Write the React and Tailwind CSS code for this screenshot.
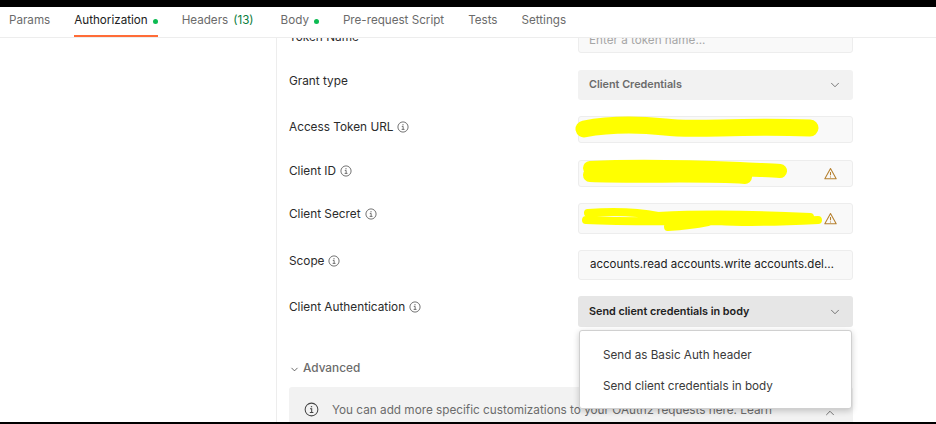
import React from 'react';
import { ChevronDown, ChevronUp } from 'lucide-react';

const tabs = [
  { label: 'Params' },
  { label: 'Authorization', dot: true, active: true },
  { label: 'Headers', count: '(13)', extra: 'mr-[3px]' },
  { label: 'Body', dot: true },
  { label: 'Pre-request Script' },
  { label: 'Tests' },
  { label: 'Settings' },
];

function InfoIcon({ size = 12, className = '' }) {
  return (
    <svg width={size} height={size} viewBox="0 0 16 16" fill="none" stroke="currentColor" strokeWidth="1.1" className={className}>
      <circle cx="8" cy="8" r="6.8" />
      <path d="M6.4 7.2H8.2V11.2M6.2 11.2H10" />
      <path d="M8 4.4V5.6" strokeWidth="1.4" />
    </svg>
  );
}

function WarnIcon() {
  return (
    <svg width="13" height="13" viewBox="0 0 16 16" fill="none" stroke="#b5802f" strokeWidth="1.3" strokeLinejoin="round">
      <path d="M8 1.8L15 14.4H1L8 1.8Z" />
      <path d="M8 6V10.2M8 11.6V12.8" />
    </svg>
  );
}

// yellow marker scribble over the redacted values
function Scribble({ width, height, d, strokeWidth, className }) {
  return (
    <svg width={width} height={height} viewBox={`0 0 ${width} ${height}`} fill="none" className={`absolute ${className}`}>
      <path d={d} stroke="#ffff00" strokeWidth={strokeWidth} strokeLinecap="round" strokeLinejoin="round" />
    </svg>
  );
}

function Row({ label, info, height, mb, labelTop = 'pt-[3px]', children }) {
  return (
    <div className={`flex ${height} ${mb}`}>
      <div className={`w-[289px] shrink-0 flex items-start gap-[4px] ${labelTop} text-[11.8px] leading-[16px] text-[#2b2b2b]`}>
        <span>{label}</span>
        {info && <InfoIcon className="mt-[2px] text-[#555]" />}
      </div>
      <div className="w-[275px] shrink-0 relative">{children}</div>
    </div>
  );
}

export default function App() {
  return (
    <div className="w-[936px] h-[424px] bg-white flex flex-col overflow-hidden font-['Inter',sans-serif]">
      <div className="h-[7px] bg-black shrink-0" />
      <div className="h-[31px] shrink-0 flex border-b border-[#ededed] pl-[9px] gap-[24px] text-[11.65px] text-[#6b6b6b] bg-white z-10">
        {tabs.map(t => (
          <div key={t.label} className={`flex items-center gap-[5px] border-b-2 ${t.extra || ''} ${t.active ? 'border-[#ff6c37] text-[#212121]' : 'border-transparent'}`}>
            <span>{t.label}</span>
            {t.count && <span className="text-[#0a7d3c]">{t.count}</span>}
            {t.dot && <span className="w-[5px] h-[5px] rounded-full bg-[#0cbb52]" />}
          </div>
        ))}
      </div>

      <div className="flex-1 flex min-h-0 relative">
        <div className="w-[277px] shrink-0 border-r border-[#ededed]" />
        <div className="flex-1 overflow-hidden pl-[12px]">
          <div className="-mt-[8px]">
            <Row label="Token Name" height="h-[23px]" mb="mb-[17px]" labelTop="-mt-[1px]">
              <div className="h-[23px] w-[275px] pt-[1px] rounded-[3px] border border-[#ededed] bg-[#f9f9f9] px-[10px] text-[11.7px] leading-[16px] text-[#a6a6a6]">
                Enter a token name...
              </div>
            </Row>
            <Row label="Grant type" height="h-[30px]" mb="mb-[16px]">
              <div className="h-[30px] rounded-[3px] bg-[#f2f2f2] flex items-center justify-between pl-[11px] pr-[11px] text-[10.8px] font-semibold text-[#6b6b6b]">
                <span className="pt-[1px]">Client Credentials</span>
                <ChevronDown size={14} strokeWidth={1.2} className="text-[#444]" />
              </div>
            </Row>
            <Row label="Access Token URL" info height="h-[27px]" mb="mb-[17px]">
              <div className="h-[27px] rounded-[3px] border border-[#ededed] bg-[#f9f9f9]" />
              <Scribble width={250} height={26} strokeWidth={17} className="-left-[3px] top-0" d="M9 13C30 9 60 8 90 11C120 15 160 9 235 12" />
            </Row>
            <Row label="Client ID" info height="h-[27px]" mb="mb-[16px]">
              <div className="h-[27px] rounded-[3px] border border-[#ededed] bg-[#f9f9f9] flex items-center justify-end pr-[15px]">
                <WarnIcon />
              </div>
              <Scribble width={215} height={26} strokeWidth={14} className="left-[2px] -top-[1px]" d="M10 9C50 7 110 8 160 10C175 11 190 11 200 12M10 16C60 18 120 15 165 18" />
            </Row>
            <Row label="Client Secret" info height="h-[31px]" mb="mb-[16px]">
              <div className="h-[31px] rounded-[3px] border border-[#ededed] bg-[#f9f9f9] flex items-center justify-end pr-[15px]">
                <WarnIcon />
              </div>
              <Scribble width={250} height={26} strokeWidth={8} className="left-0 top-[2px]" d="M10 8C40 6 60 7 80 11C120 9 170 9 232 12M8 15C50 17 90 16 140 16C170 18 200 17 240 15M90 22C105 21 120 19 130 17" />
            </Row>
            <Row label="Scope" info height="h-[30px]" mb="mb-[16px]">
              <div className="h-[30px] rounded-[3px] border border-[#ededed] bg-[#f9f9f9] flex items-center pl-[11px] pr-[12px] text-[11.5px] text-[#212121]">
                <span className="truncate">accounts.read accounts.write accounts.delete</span>
              </div>
            </Row>
            <Row label="Client Authentication" info height="h-[31px]" mb="mb-[34px]">
              <div className="h-[31px] rounded-[3px] bg-[#e6e6e6] flex items-center justify-between pl-[11px] pr-[11px] text-[10.8px] font-semibold text-[#212121]">
                <span className="pt-[1px]">Send client credentials in body</span>
                <ChevronDown size={14} strokeWidth={1.2} className="text-[#444]" />
              </div>
              <div className="absolute left-[1px] top-[34px] w-[273px] h-[79px] z-20 rounded-[3px] bg-white border border-[#d0d0d0] shadow-[0_2px_6px_rgba(0,0,0,0.2)] flex flex-col pl-[23px] pt-[16px] gap-[15px] text-[11.7px] leading-[16px] text-[#3a3a3a]">
                <span>Send as Basic Auth header</span>
                <span>Send client credentials in body</span>
              </div>
            </Row>
            <div className="flex items-center gap-[3px] mb-[10px] h-[16px] text-[11.8px] font-medium text-[#6b6b6b]">
              <ChevronDown size={11} strokeWidth={1.6} className="text-[#333]" />
              Advanced
            </div>
            <div className="w-[564px] h-[60px] rounded-[3px] bg-[#f2f2f2] flex items-start pl-[15px] pr-[16px] pt-[15px] text-[11.75px] leading-[16px] text-[#6b6b6b]">
              <InfoIcon size={15} className="text-[#444] mr-[13px] shrink-0" />
              <span className="flex-1 whitespace-nowrap">You can add more specific customizations to your OAuth2 requests here. Learn</span>
              <ChevronUp size={14} strokeWidth={1.2} className="text-[#444] mt-[4px]" />
            </div>
          </div>
        </div>
      </div>
      <div className="h-[2px] bg-black shrink-0 z-30" />
    </div>
  );
}
